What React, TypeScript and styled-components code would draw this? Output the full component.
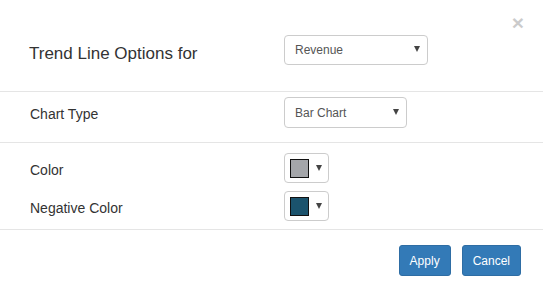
import styled, { createGlobalStyle } from 'styled-components';

const GlobalStyle = createGlobalStyle`
  html, body {
    margin: 0;
    padding: 0;
    background: #fff;
  }
  body {
    font-family: "Liberation Sans", Arial, sans-serif;
    color: #333;
  }
`;

const Modal = styled.div`
  width: 543px;
  background: #fff;
`;

const Header = styled.div`
  display: flex;
  align-items: center;
  height: 83px;
  padding: 8px 0 0 29px;
  border-bottom: 1px solid #e5e5e5;
`;

const Title = styled.h4`
  width: 255px;
  margin: 0;
  padding-top: 9px;
  font-size: 17px;
  font-weight: normal;
  line-height: 1.1;
  color: #333;
`;

const Close = styled.button`
  align-self: flex-start;
  margin: 4px 19px 0 auto;
  padding: 0;
  border: none;
  background: none;
  font-family: "Liberation Sans", Arial, sans-serif;
  font-size: 21px;
  font-weight: bold;
  line-height: 21px;
  color: #000;
  opacity: 0.2;
`;

const Section = styled.div<{ $pad: string; $gap?: number }>`
  display: flex;
  flex-direction: column;
  gap: ${(p) => p.$gap ?? 0}px;
  padding: ${(p) => p.$pad};
  border-bottom: 1px solid #e5e5e5;
`;

const Row = styled.div`
  display: flex;
  align-items: center;
  padding-left: 30px;
`;

const Label = styled.div`
  width: 254px;
  padding-top: 3px;
  font-size: 14px;
  line-height: 20px;
`;

const Select = styled.div<{ $w: number; $h: number }>`
  box-sizing: border-box;
  display: flex;
  align-items: center;
  justify-content: space-between;
  width: ${(p) => p.$w}px;
  height: ${(p) => p.$h}px;
  padding: 0 7px 0 10px;
  border: 1px solid #ccc;
  border-radius: 4px;
  background: #fff;
  font-size: 12px;
  color: #555;
`;

const Caret = styled.span`
  width: 0;
  height: 0;
  margin-top: -1px;
  border-left: 3.5px solid transparent;
  border-right: 3.5px solid transparent;
  border-top: 6px solid #444;
`;

const ColorButton = styled.div`
  box-sizing: border-box;
  display: flex;
  align-items: center;
  gap: 7px;
  width: 45px;
  height: 30px;
  padding-left: 5px;
  border: 1px solid #ccc;
  border-radius: 4px;
  background: #fff;
`;

const Swatch = styled.span<{ $color: string }>`
  box-sizing: border-box;
  width: 19px;
  height: 19px;
  border: 1px solid #111;
  background: ${(p) => p.$color};
`;

const Footer = styled.div`
  display: flex;
  justify-content: flex-end;
  gap: 11px;
  padding: 15px 22px 15px 0;
`;

const Button = styled.button`
  height: 31px;
  padding: 0 10px;
  border: 1px solid #2e6da4;
  border-radius: 3px;
  background: #337ab7;
  color: #fff;
  font-family: "Liberation Sans", Arial, sans-serif;
  font-size: 12px;
  font-weight: normal;
  line-height: 1;
`;

const App = () => {
  return (
    <>
      <GlobalStyle />
      <Modal>
        <Header>
          <Title>Trend Line Options for</Title>
          <Select $w={144} $h={30}>
            Revenue
            <Caret />
          </Select>
          <Close>×</Close>
        </Header>
        <Section $pad="5px 0 14px">
          <Row>
            <Label>Chart Type</Label>
            <Select $w={123} $h={31}>
              Bar Chart
              <Caret />
            </Select>
          </Row>
        </Section>
        <Section $pad="10px 0 8px" $gap={8}>
          <Row>
            <Label>Color</Label>
            <ColorButton>
              <Swatch $color="#a4a6aa" />
              <Caret />
            </ColorButton>
          </Row>
          <Row>
            <Label>Negative Color</Label>
            <ColorButton>
              <Swatch $color="#1b536d" />
              <Caret />
            </ColorButton>
          </Row>
        </Section>
        <Footer>
          <Button>Apply</Button>
          <Button>Cancel</Button>
        </Footer>
      </Modal>
    </>
  );
};

export default App;
